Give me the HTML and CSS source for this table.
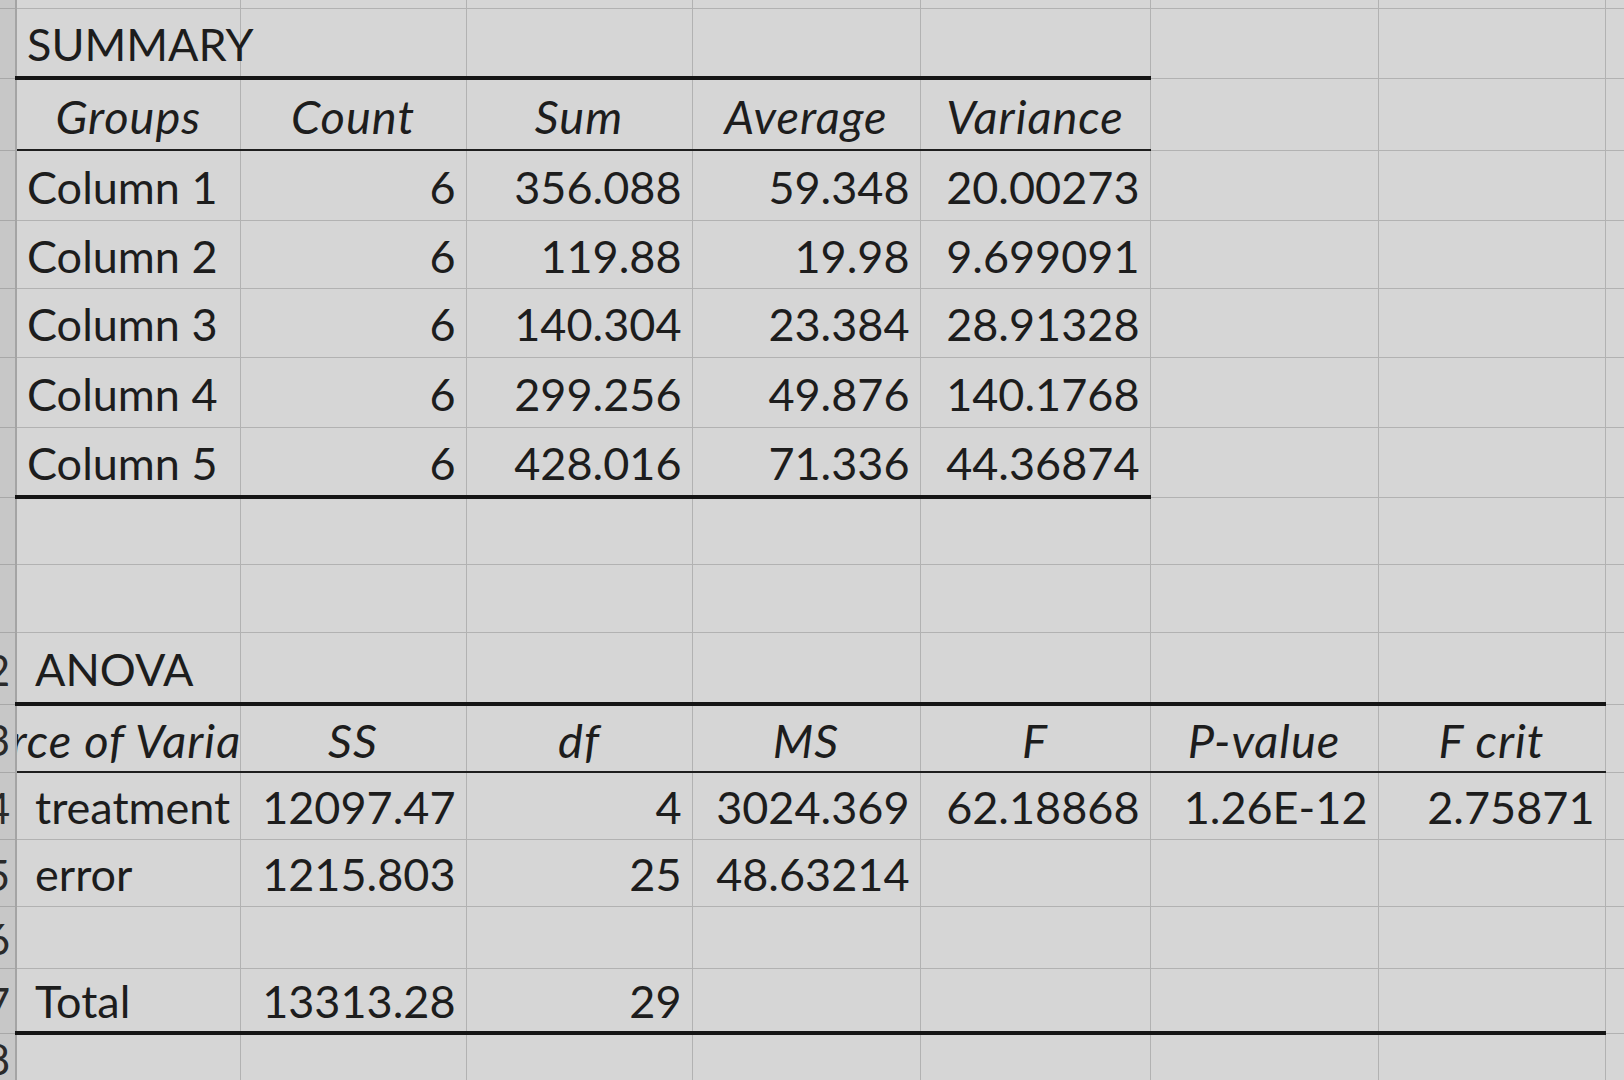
FILE: index.html
```html
<!DOCTYPE html>
<html>
<head>
<meta charset="utf-8">
<title>ANOVA</title>
<link rel="stylesheet" href="styles.css">
</head>
<body>
<table class="sheet">
<colgroup>
<col class="w-rh"><col class="w-a"><col class="w-b"><col class="w-c"><col class="w-d"><col class="w-e"><col class="w-f"><col class="w-g"><col class="w-h">
</colgroup>
<tbody>
<tr class="h8"><td class="rh"></td><td></td><td></td><td></td><td></td><td></td><td></td><td></td><td></td></tr>
<tr class="h70"><td class="rh"></td><td class="tb txt ovf">SUMMARY</td><td class="tb"></td><td class="tb"></td><td class="tb"></td><td class="tb"></td><td></td><td></td><td></td></tr>
<tr class="h72"><td class="rh"></td><td class="hb hd">Groups</td><td class="hb hd">Count</td><td class="hb hd">Sum</td><td class="hb hd">Average</td><td class="hb hd">Variance</td><td></td><td></td><td></td></tr>
<tr class="h70"><td class="rh"></td><td class="txt">Column 1</td><td class="num">6</td><td class="num">356.088</td><td class="num">59.348</td><td class="num">20.00273</td><td></td><td></td><td></td></tr>
<tr class="h68"><td class="rh"></td><td class="txt">Column 2</td><td class="num">6</td><td class="num">119.88</td><td class="num">19.98</td><td class="num">9.699091</td><td></td><td></td><td></td></tr>
<tr class="h69"><td class="rh"></td><td class="txt">Column 3</td><td class="num">6</td><td class="num">140.304</td><td class="num">23.384</td><td class="num">28.91328</td><td></td><td></td><td></td></tr>
<tr class="h70"><td class="rh"></td><td class="txt">Column 4</td><td class="num">6</td><td class="num">299.256</td><td class="num">49.876</td><td class="num">140.1768</td><td></td><td></td><td></td></tr>
<tr class="h70"><td class="rh"></td><td class="tb txt">Column 5</td><td class="tb num">6</td><td class="tb num">428.016</td><td class="tb num">71.336</td><td class="tb num">44.36874</td><td></td><td></td><td></td></tr>
<tr class="h67"><td class="rh"></td><td></td><td></td><td></td><td></td><td></td><td></td><td></td><td></td></tr>
<tr class="h68"><td class="rh"></td><td></td><td></td><td></td><td></td><td></td><td></td><td></td><td></td></tr>
<tr class="h72"><td class="rh"><div class="rn">22</div></td><td class="tb txt low">ANOVA</td><td class="tb"></td><td class="tb"></td><td class="tb"></td><td class="tb"></td><td class="tb"></td><td class="tb"></td><td></td></tr>
<tr class="h68"><td class="rh"><div class="rn">23</div></td><td class="hb hd"><div class="clip"><span>Source of Variation</span></div></td><td class="hb hd">SS</td><td class="hb hd">df</td><td class="hb hd">MS</td><td class="hb hd">F</td><td class="hb hd">P-value</td><td class="hb hd">F crit</td><td></td></tr>
<tr class="h67"><td class="rh"><div class="rn">24</div></td><td class="txt low">treatment</td><td class="num">12097.47</td><td class="num">4</td><td class="num">3024.369</td><td class="num">62.18868</td><td class="num">1.26E-12</td><td class="num">2.75871</td><td></td></tr>
<tr class="h67"><td class="rh"><div class="rn">25</div></td><td class="txt low">error</td><td class="num">1215.803</td><td class="num">25</td><td class="num">48.63214</td><td></td><td></td><td></td><td></td></tr>
<tr class="h62"><td class="rh"><div class="rn">26</div></td><td></td><td></td><td></td><td></td><td></td><td></td><td></td><td></td></tr>
<tr class="h65"><td class="rh"><div class="rn">27</div></td><td class="tb txt low">Total</td><td class="tb num">13313.28</td><td class="tb num">29</td><td class="tb"></td><td class="tb"></td><td class="tb"></td><td class="tb"></td><td></td></tr>
<tr class="h47"><td class="rh"><div class="rn">28</div></td><td></td><td></td><td></td><td></td><td></td><td></td><td></td><td></td></tr>
</tbody>
</table>
</body>
</html>
```

FILE: styles.css
```css
html, body {
  margin: 0;
  padding: 0;
  width: 1624px;
  height: 1080px;
  overflow: hidden;
  background: #d7d7d7;
}

.sheet {
  border-collapse: collapse;
  table-layout: fixed;
  width: 1624px;
  font-family: Lato, "Open Sans", "Liberation Sans", sans-serif;
  font-size: 45px;
  color: #1d1d1d;
  background: #d6d6d6;
}

.w-rh { width: 16px; }
.w-a { width: 224px; }
.w-b { width: 226px; }
.w-c { width: 226px; }
.w-d { width: 228px; }
.w-e { width: 230px; }
.w-f { width: 228px; }
.w-g { width: 227px; }
.w-h { width: 19px; }

.h8 { height: 8px; }
.h47 { height: 47px; }
.h62 { height: 62px; }
.h65 { height: 65px; }
.h67 { height: 67px; }
.h68 { height: 68px; }
.h69 { height: 69px; }
.h70 { height: 70px; }
.h72 { height: 72px; }

.sheet td {
  border-right: 1px solid #b2b2b2;
  border-bottom: 1px solid #b2b2b2;
  padding: 4px 9px 0 9px;
  white-space: nowrap;
  overflow: hidden;
  line-height: 1;
  vertical-align: middle;
}

.sheet td.rh {
  background: #c7c7c7;
  border-right: 2px solid #a4a4a4;
  border-bottom: 1px solid #a8a8a8;
  padding: 4px 0 0 0;
}

.rn {
  display: flex;
  justify-content: flex-end;
  overflow: hidden;
  margin-right: 5px;
  font-size: 42px;
  color: #2a2a2a;
}

.sheet td.txt {
  text-align: left;
  padding-left: 10px;
}

.sheet td.low {
  padding-left: 18px;
}

.sheet td.ovf {
  overflow: visible;
}

.sheet td.num {
  text-align: right;
  padding-right: 10px;
}

.sheet td.hd {
  text-align: center;
  font-style: italic;
  font-size: 47px;
  letter-spacing: 1px;
}

.clip {
  display: flex;
  justify-content: center;
  overflow: hidden;
  margin: 0 -9px;
}

.clip span {
  flex-shrink: 0;
}

.sheet td.tb {
  border-bottom: 4px solid #151515;
}

.sheet td.hb {
  border-bottom: 2px solid #1e1e1e;
}
```
